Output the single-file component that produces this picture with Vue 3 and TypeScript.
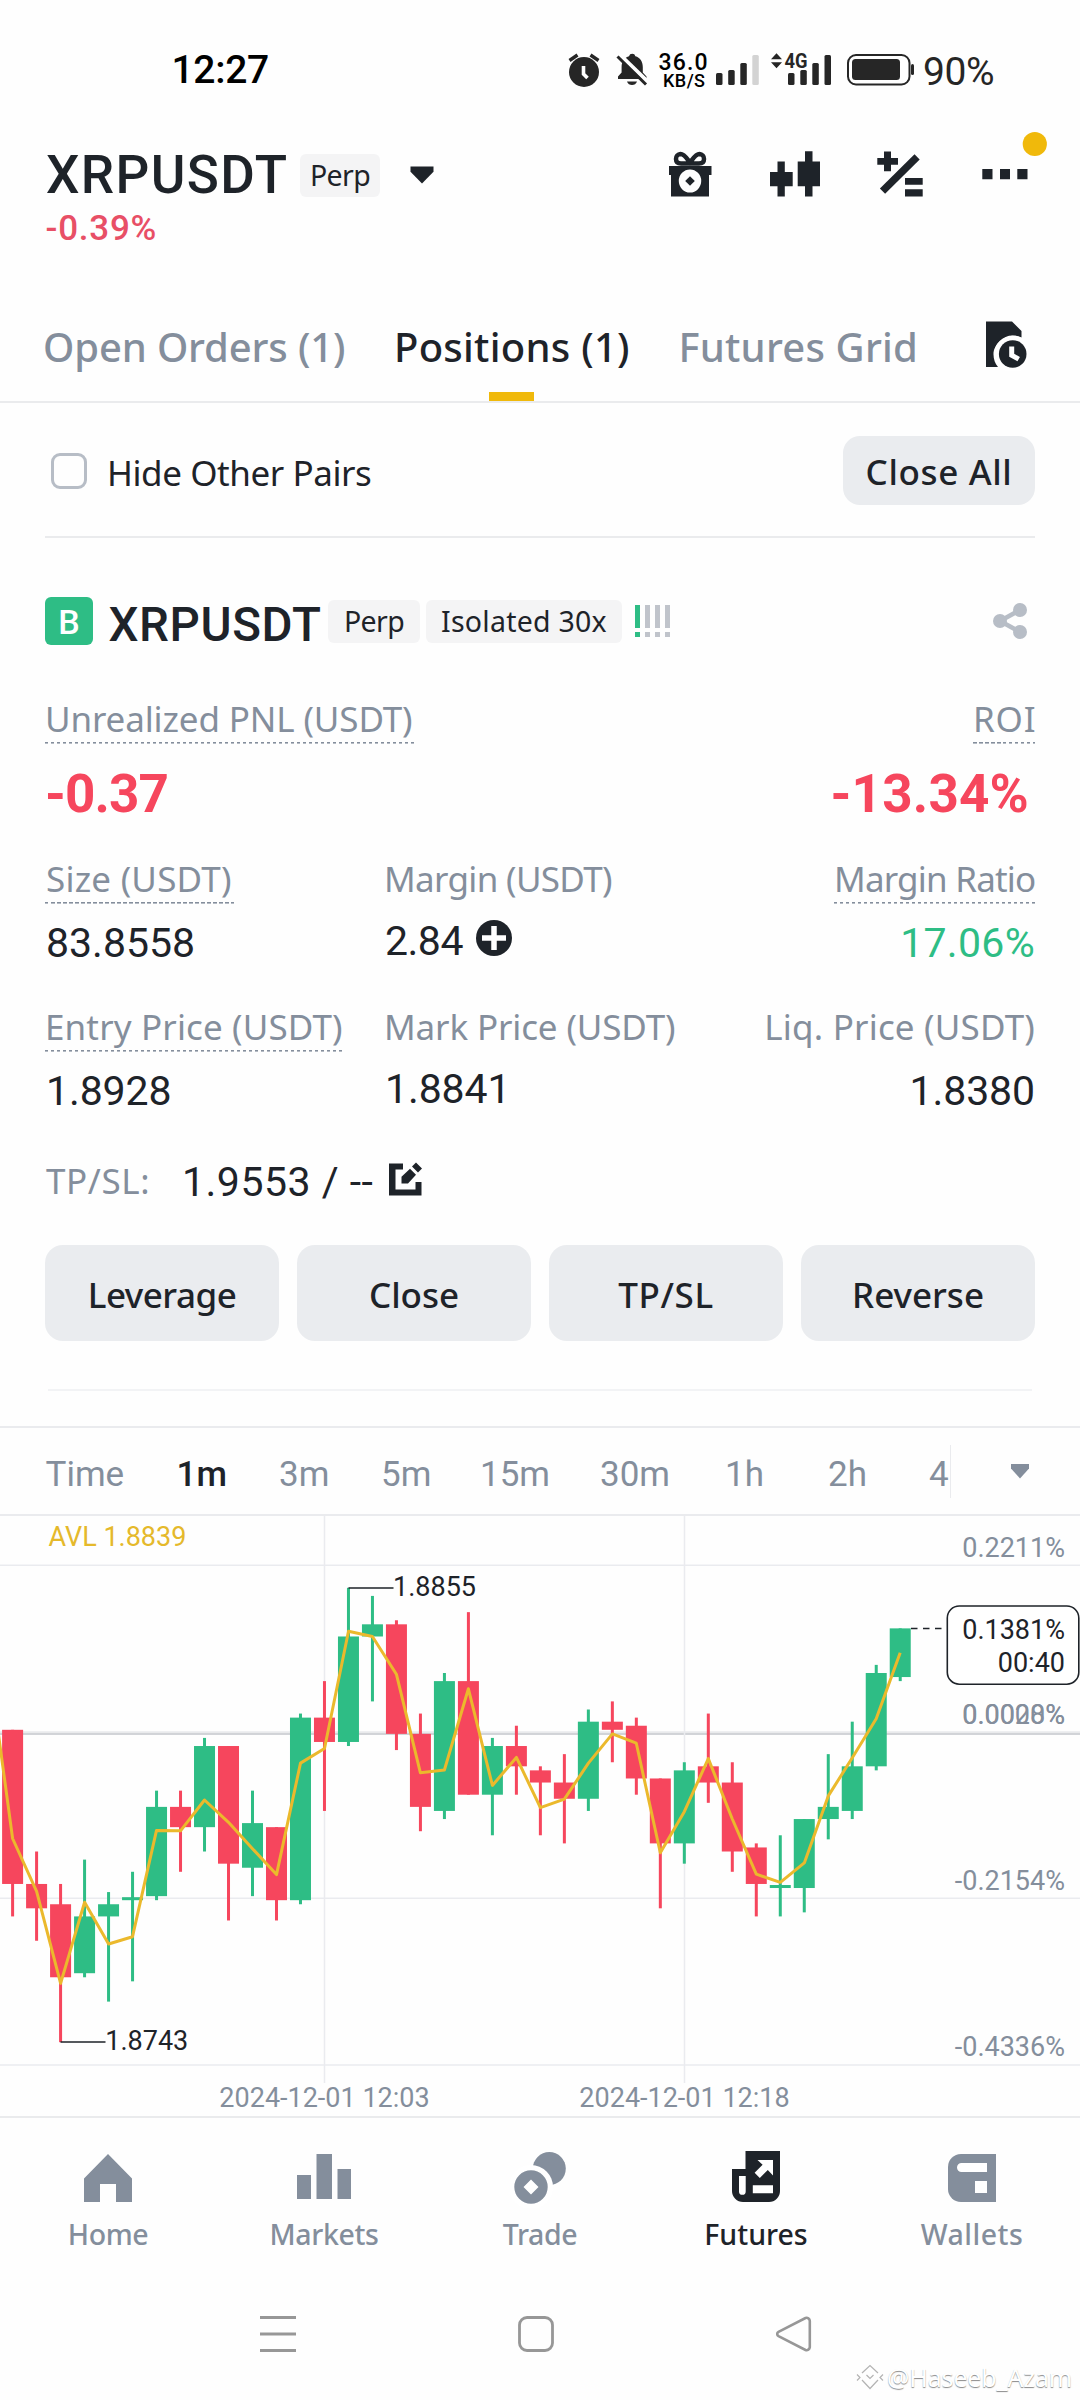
<script setup lang="ts">
interface Candle {
  x: number
  up: boolean
  bodyTop: number
  bodyHeight: number
  wickTop: number
  wickHeight: number
}

// [open, high, low, close] in units of 0.0001 above 1.8000
const quotes: [number, number, number, number][] = [
  [820, 820, 774, 782], [782, 790, 768, 776], [777, 782, 743, 759], [760, 788, 759, 774],
  [774, 780, 753, 777], [778, 785, 758, 778], [779, 805, 778, 801], [801, 805, 785, 796],
  [796, 818, 790, 816], [816, 816, 773, 787], [786, 805, 779, 797], [796, 796, 773, 778],
  [778, 824, 777, 823], [823, 832, 800, 817], [817, 855, 816, 843], [843, 853, 827, 846],
  [846, 847, 815, 819], [819, 824, 795, 801], [800, 834, 798, 832], [832, 849, 804, 804],
  [804, 818, 794, 816], [816, 821, 804, 811], [810, 811, 794, 807], [807, 814, 792, 803],
  [803, 825, 800, 822], [822, 827, 812, 820], [821, 823, 804, 808], [808, 808, 776, 792],
  [792, 812, 787, 810], [811, 824, 802, 807], [807, 812, 785, 790], [791, 792, 774, 782],
  [781, 794, 774, 781], [781, 798, 775, 798], [798, 814, 793, 801], [800, 822, 798, 811],
  [811, 836, 810, 834], [833, 845, 832, 845]
]
const averages: number[] = [
  793.2, 780.2, 757.5, 777.5, 767.2, 769, 795.2, 795.1, 802.7, 797.2, 790.7, 784.3, 811.8, 815.4,
  844.3, 843, 833.7, 809.4, 810.1, 830.1, 806.3, 813.2, 800.8, 802.9, 811.8, 819, 816.7, 789.7,
  799.8, 812.9, 798, 784.4, 782.4, 787.2, 803.7, 813.1, 822.7, 839
]

const step = 23.99
const candleX = (i: number): number => 12.6 + i * step
const priceY = (p: number): number => 1587.8 + (855 - p) * 4.057

const candles: Candle[] = quotes.map(([o, h, l, c], i) => {
  const top = priceY(Math.max(o, c))
  const bottom = priceY(Math.min(o, c))
  const bodyHeight = Math.max(bottom - top, 3)
  return {
    x: candleX(i),
    up: c >= o,
    bodyTop: bottom - bodyHeight,
    bodyHeight,
    wickTop: priceY(h),
    wickHeight: priceY(l) - priceY(h)
  }
})
const avlPoints: string = [`-11.5,${priceY(837)}`]
  .concat(averages.map((p, i) => `${candleX(i).toFixed(1)},${priceY(p).toFixed(1)}`))
  .join(' ')

const actions: string[] = ['Leverage', 'Close', 'TP/SL', 'Reverse']
const intervals: string[] = ['Time', '1m', '3m', '5m', '15m', '30m', '1h', '2h', '4']
const gridY: number[] = [1565.2, 1898.2, 2065]
const gridX: number[] = [324.5, 684.5]
const scaleLabels: { text: string; y: number }[] = [
  { text: '0.2211%', y: 1557.3 },
  { text: '0.0000%', y: 1724 },
  { text: '0.0028%', y: 1724 },
  { text: '-0.2154%', y: 1890 },
  { text: '-0.4336%', y: 2056 }
]
</script>

<template>
  <div class="screen">
    <div class="status">
      <span class="clock">12:27</span>
      <svg class="status-icons" width="440" height="50" viewBox="560 44 440 50">
        <g fill="#262626">
          <circle cx="584" cy="71" r="15" />
          <path d="M569.5 59.5 577.5 54M598.5 59.5 590.5 54" stroke="#262626" stroke-width="3.4" />
          <path d="M583.5 65v8l4 4" stroke="#fff" stroke-width="3.6" fill="none" />
          <path d="M618 78v-2.6l3.6-4V66c0-6 3.6-9.8 7.4-10.7a3.3 3.3 0 0 1 6.4 0c4.600 1.3 7.4 5.3 7.4 10.700v5.400l3.700 4V78z" />
          <path d="M627 80.5h10c-.8 2.400-2.700 3.600-5 3.600s-4.200-1.200-5-3.600z" />
          <path d="M619 53 649 82" stroke="#fff" stroke-width="4" />
          <path d="M617.5 55.5 646 83.5" stroke="#262626" stroke-width="3" />
          <rect x="716" y="72" width="6.5" height="12" rx="1.5" />
          <rect x="728.2" y="69" width="6.5" height="15" rx="1.5" />
          <rect x="740.3" y="62" width="6.5" height="22" rx="1.5" />
          <rect x="752.3" y="54" width="6.5" height="30" rx="1.5" fill="#d3d3d3" />
          <path d="M776.5 52.2 782 58.2H771zM776.5 67.2 782 61.2H771z" />
          <rect x="788" y="72" width="6.5" height="12" rx="1.5" />
          <rect x="800.3" y="69" width="6.5" height="15" rx="1.5" />
          <rect x="812.3" y="62" width="6.5" height="22" rx="1.5" />
          <rect x="824.5" y="54" width="6.5" height="30" rx="1.5" />
          <rect x="848" y="54" width="61.5" height="29.5" rx="8" fill="none" stroke="#262626" stroke-width="2" />
          <rect x="852" y="58" width="48" height="21" rx="3.5" />
          <rect x="911" y="63" width="3" height="11" rx="1.5" />
        </g>
        <text class="net" x="658.5" y="69" font-size="23" textLength="49">36.0</text>
        <text class="net" x="663" y="85.5" font-size="18" textLength="42">KB/S</text>
        <text class="gen" x="784.5" y="67" font-size="21" textLength="23" lengthAdjust="spacingAndGlyphs">4G</text>
        <text class="batt" x="923" y="84" font-size="39" textLength="71.5">90%</text>
      </svg>
    </div>

    <div class="title-row">
      <span class="pair">XRPUSDT</span>
      <span class="chip head-chip">Perp</span>
      <svg class="head-caret" width="24" height="18" viewBox="0 0 24 18">
        <path d="M.5.5h23v5.3L12 17.5.5 5.8z" fill="#1e2329" />
      </svg>
      <svg class="head-icons" width="400" height="70" viewBox="660 140 400 70">
        <g fill="#1e2329">
          <path fill-rule="evenodd" d="M669 166h42.5v9H709v21.5h-38V175h-2zM690 169.5a11.2 11.5 0 1 0 0 23 11.2 11.5 0 1 0 0-23z" />
          <path d="M690 176.2l4.8 4.8-4.8 4.8-4.8-4.8z" />
          <path d="M690 162.500c-2.500-3-5.500-8.500-9.500-8.500a4.800 4.800 0 0 0-4.500 5c0 3 2 4.500 5 4.500h18c3 0 5-1.500 5-4.500a4.800 4.800 0 0 0-4.500-5c-4 0-7 5.500-9.500 8.500z" fill="none" stroke="#1e2329" stroke-width="4.5" />
          <path d="M777.5 161.5h7.300V172H792.700v14.300H784.800v10.200h-7.300V186.300H770V172h7.500zM805 151.300h7.500v10.200H820v24.800h-7.500v10.200H805V186.300h-7.300V161.500h7.300z" />
          <path d="M884 151.5h7v6.500h7v6.700h-7v6.500h-7v-6.500h-6.700V158h6.700z" />
          <path d="M914.5 154.300l5.200 5.300-34.600 34.200-5.200-5.300z" />
          <path d="M905 178h17.7v6.700H905zM905 189.2h17.700v7.300H905z" />
          <path d="M982.300 169h10.200v10.200h-10.200zM1000 169h10v10.200h-10zM1017.300 169h10.200v10.200h-10.200z" />
        </g>
        <circle cx="1034.8" cy="144" r="12.1" fill="#f0b90b" />
      </svg>
    </div>
    <div class="change">-0.39%</div>

    <div class="tabs">
      <span class="tab orders">Open Orders (1)</span>
      <span class="tab active">Positions (1)</span>
      <span class="tab bots">Futures Grid</span>
      <svg class="history" width="44" height="52" viewBox="984 319 44 52">
        <path d="M986 321.5h26l9.500 9.500v6.500c-13-6-28 5-28 17 0 4.500 1.500 9 4.500 12.500H986z" fill="#1e2329" />
        <circle cx="1012.7" cy="354" r="18.5" fill="#fff" />
        <circle cx="1012.7" cy="354" r="13.8" fill="#1e2329" />
        <path d="M1011.7 346.5v8.700l7 4" fill="none" stroke="#fff" stroke-width="5" />
      </svg>
    </div>

    <div class="filter">
      <span class="box"></span>
      <span class="filter-text">Hide Other Pairs</span>
      <span class="close-all">Close All</span>
    </div>

    <div class="position">
      <div class="pos-head">
        <span class="side">B</span>
        <span class="pos-pair">XRPUSDT</span>
        <span class="chip perp">Perp</span>
        <span class="chip iso">Isolated 30x</span>
        <svg class="risk" width="36" height="32" viewBox="0 0 36 32">
          <path d="M0 0h5v23H0zM0 27h5v5H0z" fill="#2ebd85" />
          <path d="M10 0h5v23h-5zM10 27h5v5h-5zM20 0h5v23h-5zM20 27h5v5h-5zM30 0h5v23h-5zM30 27h5v5h-5z" fill="#c0c4cb" />
        </svg>
        <svg class="share" width="34" height="36" viewBox="0 0 34 36">
          <path d="M27 7 7 18l20 11" fill="none" stroke="#b7bdc6" stroke-width="4.5" />
          <g fill="#b7bdc6"><circle cx="27" cy="7" r="7" /><circle cx="7" cy="18" r="7" /><circle cx="27" cy="29" r="7" /></g>
        </svg>
      </div>

      <div class="pnl">
        <div>
          <div class="label dashed w-pnl">Unrealized PNL (USDT)</div>
          <div class="big">-0.37</div>
        </div>
        <div class="right">
          <div class="label dashed w-roi">ROI</div>
          <div class="big roi">-13.34%</div>
        </div>
      </div>

      <div class="stats">
        <div>
          <div class="label dashed w-size">Size (USDT)</div>
          <div class="value">83.8558</div>
        </div>
        <div>
          <div class="label w-margin">Margin (USDT)</div>
          <div class="value mid">2.84
            <svg class="plus" width="36" height="36" viewBox="0 0 36 36">
              <circle cx="18" cy="18" r="18" fill="#1e2329" />
              <path d="M18 6v24M6 18h24" stroke="#fff" stroke-width="5.5" />
            </svg>
          </div>
        </div>
        <div class="right">
          <div class="label dashed w-ratio">Margin Ratio</div>
          <div class="value green">17.06%</div>
        </div>
      </div>

      <div class="stats second">
        <div>
          <div class="label dashed w-entry">Entry Price (USDT)</div>
          <div class="value flat">1.8928</div>
        </div>
        <div>
          <div class="label w-mark">Mark Price (USDT)</div>
          <div class="value mid flat">1.8841</div>
        </div>
        <div class="right">
          <div class="label w-liq">Liq. Price (USDT)</div>
          <div class="value flat">1.8380</div>
        </div>
      </div>

      <div class="tpsl">
        <span class="tpsl-label">TP/SL:</span>
        <span class="tpsl-value">1.9553 / --</span>
        <svg class="edit" width="34" height="34" viewBox="0 0 34 34">
          <path d="M14 1.5v6H6.5v20h20V20H32.5v13.5H0v-32z" fill="#1e2329" />
          <path d="M12.5 21.5v-6.800l8.500-8 6 6-8 8.800zM23 4.500 27 .5l6 6-4 4z" fill="#1e2329" />
        </svg>
      </div>

      <div class="actions">
        <span v-for="a in actions" :key="a" class="action">{{ a }}</span>
      </div>
      <div class="rule"></div>
    </div>

    <div class="intervals">
      <div class="interval-list">
        <span v-for="(t, i) in intervals" :key="t" class="interval" :class="['i' + i, { on: t === '1m' }]">{{ t }}</span>
      </div>
      <svg class="more" width="18" height="15" viewBox="0 0 18 15">
        <path d="M0 0h18v4.5L9 14.5 0 4.5z" fill="#848e9c" />
      </svg>
    </div>

    <svg class="chart" width="1080" height="600" viewBox="0 1516 1080 600">
      <g stroke="#eaebef" stroke-width="1.5">
        <line v-for="y in gridY" :key="y" x1="0" x2="1080" :y1="y" :y2="y" />
        <line x1="0" x2="1080" y1="1732.2" y2="1732.2" stroke="#e9eaec" stroke-width="2" />
        <line x1="0" x2="1080" y1="1734" y2="1734" stroke="#c3c6cb" />
        <line v-for="x in gridX" :key="x" :x1="x" :x2="x" y1="1516" y2="2083" />
      </g>
      <g v-for="c in candles" :key="c.x" :fill="c.up ? '#2ebd85' : '#f6465d'">
        <rect :x="c.x - 1.5" :y="c.wickTop" width="3" :height="c.wickHeight" />
        <rect :x="c.x - 10.5" :y="c.bodyTop" width="21" :height="c.bodyHeight" />
      </g>
      <polyline :points="avlPoints" fill="none" stroke="#ebb92c" stroke-width="3" stroke-linejoin="round" />
      <g stroke="#1e2329" stroke-width="1.5">
        <path d="M348.5 1588h45M60.5 2042h45" />
        <path d="M911 1628.5h31" stroke-dasharray="6.5 5.5" />
      </g>
      <text class="avl" x="48.5" y="1546.3">AVL 1.8839</text>
      <text class="mark" x="393" y="1596">1.8855</text>
      <text class="mark" x="105.3" y="2050">1.8743</text>
      <text v-for="s in scaleLabels" :key="s.text" class="scale" x="1065" :y="s.y">{{ s.text }}</text>
      <rect x="947.3" y="1606" width="131.5" height="78.2" rx="12" fill="#fff" stroke="#1e2329" stroke-width="1.6" />
      <text class="now" x="1065" y="1639">0.1381%</text>
      <text class="now" x="1065" y="1671.5">00:40</text>
      <text class="date" x="324.5" y="2106.8">2024-12-01 12:03</text>
      <text class="date" x="684.5" y="2106.8">2024-12-01 12:18</text>
    </svg>

    <div class="nav">
      <div class="nav-item">
        <svg width="60" height="60" viewBox="78 2148 60 60">
          <path d="M108 2154l24 24.500v23.500h-16v-18h-16v18H84v-23.500z" />
        </svg>
        <span>Home</span>
      </div>
      <div class="nav-item">
        <svg width="60" height="60" viewBox="294 2148 60 60">
          <path d="M297 2175h14v24h-14zM316.5 2154H332v45h-15.500zM337.500 2169H351v30h-13.500z" />
        </svg>
        <span>Markets</span>
      </div>
      <div class="nav-item">
        <svg width="60" height="60" viewBox="510 2148 60 60">
          <circle cx="549.3" cy="2168.6" r="16.5" />
          <circle cx="531" cy="2187" r="22" fill="#fff" />
          <path fill-rule="evenodd" d="M531 2170.3a16.600 16.600 0 1 0 0 33.400 16.600 16.600 0 1 0 0-33.400zm0 9.200l7.500 7.500-7.500 7.500-7.500-7.500z" />
        </svg>
        <span>Trade</span>
      </div>
      <div class="nav-item current">
        <svg width="60" height="60" viewBox="726 2148 60 60">
          <path d="M732 2169h13.500v-18H780v40a11 11 0 0 1-11 11h-26a11 11 0 0 1-11-11z" />
          <path fill="#fff" d="M739 2176h6.700v15.500a3.350 3.350 0 0 1-6.700 0zM752.800 2185.200H773v8h-20.200zM757.500 2160H773v15.500l-5.200-5.500-8 8-5.200-5.200 8-8z" />
        </svg>
        <span>Futures</span>
      </div>
      <div class="nav-item wallets">
        <svg width="60" height="60" viewBox="942 2148 60 60">
          <path d="M961 2154h35v48h-35a13 13 0 0 1-13-13v-22a13 13 0 0 1 13-13z" />
          <path fill="#fff" d="M961.5 2163H987v9h-25.500a4.500 4.500 0 0 1 0-9zM975 2181h12v12h-12z" />
        </svg>
        <span>Wallets</span>
      </div>
    </div>

    <div class="system">
      <svg width="36" height="36" viewBox="0 0 36 36">
        <path d="M0 1.500h36M0 18h36M0 34.500h36" stroke="#979797" stroke-width="3" />
      </svg>
      <svg width="36" height="36" viewBox="0 0 36 36">
        <rect x="1.5" y="1.5" width="33" height="33" rx="7.5" fill="none" stroke="#979797" stroke-width="2.8" />
      </svg>
      <svg width="36" height="36" viewBox="0 0 36 36">
        <path d="M2.5 15.800 29.500 2a3.200 3.200 0 0 1 4.300 2.800v26.400a3.200 3.200 0 0 1-4.300 2.800L2.500 20.200a2.500 2.500 0 0 1 0-4.400z" fill="none" stroke="#979797" stroke-width="2.6" />
      </svg>
    </div>

    <div class="credit">
      <svg width="30" height="26" viewBox="0 0 30 26">
        <path d="M7 9l8-7.500L23 9M2 10.500l3 3-3 3M28 10.500l-3 3 3 3M11.500 11l3.500 3.500 3.500-3.500M7 16l8 8.500 8-8.500" fill="none" stroke="#b3b3b3" stroke-width="1.2" />
      </svg>
      <span>@Haseeb_Azam</span>
    </div>
  </div>
</template>

<style>
body {
  background: #fff;
}
</style>

<style scoped>
.screen {
  position: relative;
  display: flex;
  flex-direction: column;
  width: 1080px;
  height: 2400px;
  overflow: hidden;
  background: #fefefe;
  color: #1e2329;
  font-family: Roboto, 'Noto Sans', sans-serif;
}
.screen > * {
  flex: none;
}
svg {
  display: block;
  flex: none;
}
span {
  white-space: nowrap;
}
.chip,
.tab,
.filter-text,
.close-all,
.label,
.tpsl-label,
.action,
.nav-item {
  font-family: 'Noto Sans', Roboto, sans-serif;
}
.status {
  display: flex;
  align-items: center;
  height: 140px;
  padding: 0 80px 0 171.5px;
}
.clock {
  font-size: 39px;
  font-weight: 500;
  letter-spacing: -0.3px;
  color: #000;
}
.status-icons {
  margin-left: auto;
}
.net {
  font-weight: 500;
  fill: #000;
}
.gen {
  font-weight: 700;
  fill: #262626;
}
.batt {
  fill: #262626;
}
.title-row {
  display: flex;
  align-items: center;
  height: 70px;
  padding: 0 20px 0 46px;
}
.pair {
  width: 254px;
  font-size: 53px;
  font-weight: 500;
  line-height: 72px;
  letter-spacing: 1.35px;
}
.chip {
  box-sizing: border-box;
  height: 43px;
  padding-top: 2px;
  border-radius: 6px;
  background: #f4f4f5;
  font-size: 28.5px;
  line-height: 39px;
  letter-spacing: -0.6px;
  text-align: center;
}
.head-chip {
  width: 80px;
}
.head-caret {
  margin-left: 30px;
}
.head-icons {
  margin-left: auto;
  overflow: visible;
}
.change {
  height: 36px;
  padding-left: 45.5px;
  font-size: 35px;
  font-weight: 500;
  line-height: 38px;
  letter-spacing: 0.75px;
  color: #e84f66;
}
.tabs {
  display: grid;
  grid-template-columns: 351px 284.5px 304.5px auto;
  align-items: center;
  box-sizing: border-box;
  height: 110px;
  margin-top: 47px;
  padding-left: 44px;
  border-bottom: 2px solid #eaebed;
}
.tab {
  position: relative;
  left: -1px;
  font-size: 40px;
  font-weight: 500;
  line-height: 108px;
  color: #848e9c;
}
.orders {
  letter-spacing: -0.14px;
}
.bots {
  letter-spacing: 0.2px;
}
.active {
  letter-spacing: 0.26px;
  color: #1e2329;
}
.active::after {
  content: '';
  position: absolute;
  bottom: 0;
  left: 95px;
  width: 45px;
  height: 9px;
  background: #f0b90b;
}
.history {
  margin-top: -4px;
}
.filter {
  display: flex;
  align-items: center;
  height: 133px;
  margin: 0 45px;
  border-bottom: 2px solid #eaebed;
}
.box {
  box-sizing: border-box;
  width: 36px;
  height: 36px;
  margin: 3px 0 0 6px;
  border: 3px solid #b7bdc6;
  border-radius: 9px;
}
.filter-text {
  margin-left: 20px;
  padding-top: 6px;
  font-size: 35px;
  letter-spacing: -0.43px;
}
.close-all {
  box-sizing: border-box;
  width: 192px;
  height: 69px;
  margin: 2px 0 0 auto;
  padding-top: 3px;
  border-radius: 17px;
  background: #eaecef;
  font-size: 35px;
  font-weight: 500;
  line-height: 65px;
  letter-spacing: 0.65px;
  text-align: center;
}
.position {
  display: flex;
  flex-direction: column;
  padding: 0 45px;
}
.pos-head {
  display: flex;
  align-items: center;
  box-sizing: border-box;
  height: 156px;
  padding-top: 10px;
}
.side {
  width: 48px;
  height: 48px;
  border-radius: 6px;
  background: #2ebd85;
  color: #fff;
  font-size: 34px;
  font-weight: 500;
  line-height: 50px;
  text-align: center;
}
.pos-pair {
  width: 219.5px;
  margin-left: 15.5px;
  padding-top: 8px;
  font-size: 47.5px;
  font-weight: 500;
  letter-spacing: 0.6px;
}
.perp {
  width: 92px;
}
.iso {
  width: 196px;
  margin-left: 6px;
  letter-spacing: 0.25px;
}
.risk {
  margin-left: 13px;
}
.share {
  margin: 0 8px 0 auto;
}
.pnl {
  display: flex;
  justify-content: space-between;
}
.right {
  display: flex;
  flex-direction: column;
  align-items: flex-end;
}
.label {
  box-sizing: border-box;
  height: 50px;
  font-size: 35px;
  line-height: 49px;
  white-space: nowrap;
  color: #848e9c;
}
.dashed {
  background: repeating-linear-gradient(90deg, #848e9c 0 3.5px, transparent 3.5px 6px) 0 100% / 100% 1.6px no-repeat;
}
.w-pnl {
  width: 369px;
  letter-spacing: -0.13px;
}
.w-roi {
  width: 62px;
  letter-spacing: 0.8px;
}
.w-size {
  width: 189px;
  padding-left: 1px;
  letter-spacing: 0.22px;
}
.w-margin {
  letter-spacing: -0.67px;
}
.w-ratio {
  width: 201px;
  letter-spacing: -0.8px;
}
.w-entry {
  width: 297px;
  letter-spacing: 0.14px;
}
.w-mark {
  letter-spacing: -0.14px;
}
.w-liq {
  letter-spacing: 0.19px;
}
.big {
  height: 98px;
  font-size: 53px;
  font-weight: 700;
  line-height: 101px;
  letter-spacing: -0.9px;
  color: #f6465d;
}
.roi {
  padding-right: 6px;
  letter-spacing: 0.2px;
}
.stats {
  display: grid;
  grid-template-columns: 339px 1fr auto;
  margin-top: 12px;
}
.second {
  margin-top: 21px;
}
.value {
  height: 77px;
  padding-left: 1px;
  font-size: 41px;
  line-height: 78px;
}
.mid {
  display: flex;
  padding-left: 1px;
  line-height: 74px;
  letter-spacing: -0.5px;
}
.flat {
  letter-spacing: -0.1px;
}
.plus {
  margin: 16px 0 0 13px;
}
.green {
  letter-spacing: 0.3px;
  color: #2ebd85;
}
.tpsl {
  display: flex;
  height: 105px;
  line-height: 106px;
}
.tpsl-label {
  width: 136px;
  padding-left: 1px;
  font-size: 35px;
  line-height: 104px;
  letter-spacing: 0.6px;
  color: #848e9c;
}
.tpsl-value {
  width: 207px;
  font-size: 41px;
  letter-spacing: 0.5px;
}
.edit {
  margin-top: 33px;
}
.actions {
  display: grid;
  grid-template-columns: repeat(4, 234px);
  column-gap: 18px;
  margin-top: 11px;
}
.action {
  height: 96px;
  border-radius: 18px;
  background: #eaecef;
  font-size: 35px;
  font-weight: 500;
  line-height: 99px;
  text-align: center;
}
.action:first-child {
  letter-spacing: -0.5px;
}
.action:nth-child(3) {
  letter-spacing: 0.6px;
}
.rule {
  height: 2px;
  margin: 48px 3px 35px;
  background: #f2f3f5;
}
.intervals {
  display: flex;
  align-items: center;
  height: 86px;
  border-top: 2px solid #eaebee;
  border-bottom: 2px solid #eaebee;
}
.interval-list {
  display: flex;
  box-sizing: border-box;
  width: 951px;
  height: 53px;
  padding-left: 45.5px;
  overflow: hidden;
  border-right: 1.5px solid #eaebee;
}
.interval {
  flex: none;
  font-size: 35px;
  line-height: 60px;
  color: #848e9c;
}
.on {
  font-weight: 500;
  color: #1e2329;
}
.i0 {
  width: 131px;
}
.i1 {
  width: 102.5px;
}
.i2 {
  width: 102px;
}
.i3 {
  width: 99px;
}
.i4 {
  width: 120px;
}
.i5 {
  width: 125px;
}
.i6 {
  width: 103px;
}
.i7 {
  width: 101px;
}
.more {
  margin-left: 60px;
}
.chart text {
  font-size: 27px;
}
.avl {
  fill: #e5b92b;
}
.mark,
.now {
  fill: #1e2329;
}
.scale {
  fill: #848e9c;
}
.scale,
.now {
  text-anchor: end;
}
.date {
  fill: #848e9c;
  text-anchor: middle;
}
.nav {
  display: grid;
  grid-template-columns: repeat(5, 216px);
  box-sizing: border-box;
  height: 162px;
  border-top: 2px solid #eaebed;
}
.nav-item {
  display: flex;
  flex-direction: column;
  align-items: center;
  padding-top: 30px;
  color: #848e9c;
  fill: #848e9c;
  font-size: 28.5px;
  font-weight: 500;
  line-height: 52px;
  letter-spacing: -0.4px;
}
.wallets {
  letter-spacing: 0.5px;
}
.current {
  color: #1e2329;
  fill: #1e2329;
  letter-spacing: 0;
}
.system {
  display: flex;
  gap: 222px;
  padding: 38px 0 0 260px;
}
.credit {
  position: absolute;
  top: 2362px;
  left: 855px;
  display: flex;
  align-items: center;
  gap: 2px;
  color: #fff;
  font: 25px/30px 'Noto Sans', sans-serif;
  letter-spacing: -0.15px;
  text-shadow: 0 1px 1px #8a8a8a;
}
</style>
